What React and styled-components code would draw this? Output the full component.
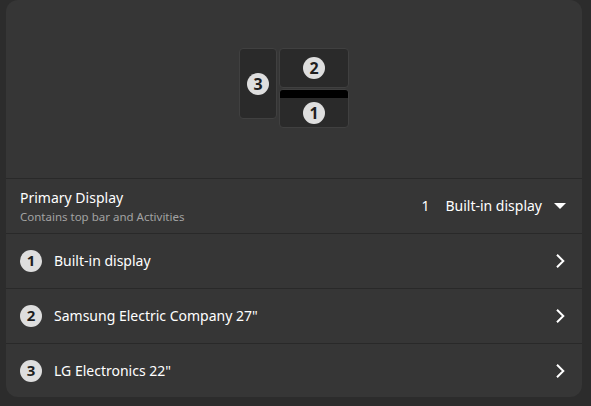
import React from "react";
import styled, { createGlobalStyle } from "styled-components";

const Global = createGlobalStyle`
  html, body { margin: 0; padding: 0; background: #2c2c2c; }
  body { font-family: "Noto Sans", "Open Sans", sans-serif; color: #ffffff; }
`;

const Page = styled.div`
  width: 591px;
  height: 406px;
  padding: 0 9px 0 6px;
  box-sizing: border-box;
`;

const Card = styled.div`
  background: #363636;
  border-radius: 12px;
  height: 397px;
  display: flex;
  flex-direction: column;
  overflow: hidden;
`;

const Arrangement = styled.div`
  height: 179px;
  flex-shrink: 0;
  display: flex;
  align-items: center;
  justify-content: center;
  border-bottom: 1px solid #292929;
  padding-bottom: 2px;
  box-sizing: border-box;
`;

const Canvas = styled.div`
  position: relative;
  width: 110px;
  height: 80px;
`;

const Monitor = styled.div`
  position: absolute;
  box-sizing: border-box;
  background: #2a2a2a;
  border: 1px solid #404040;
  border-radius: 4px;
  display: flex;
  flex-direction: column;
  align-items: center;
  justify-content: center;
  overflow: hidden;
`;

const TopBar = styled.div`
  position: absolute;
  left: 0;
  right: 0;
  top: 0;
  height: 8px;
  background: #000;
`;

const Badge = styled.div`
  width: ${(p) => p.size}px;
  height: ${(p) => p.size}px;
  border-radius: 50%;
  background: #dedede;
  color: #1e1e1e;
  font-weight: 700;
  font-size: ${(p) => p.fs}px;
  display: flex;
  align-items: center;
  justify-content: center;
  flex-shrink: 0;
  line-height: 1;
  position: relative;
`;

const Row = styled.div`
  height: 54px;
  flex-shrink: 0;
  display: flex;
  align-items: center;
  padding: 0 14px 1px 14px;
  box-sizing: border-box;
  border-bottom: ${(p) => (p.last ? "none" : "1px solid #292929")};
  height: ${(p) => (p.last ? "54px" : "55px")};
  gap: 12px;
`;

const TitleBlock = styled.div`
  display: flex;
  flex-direction: column;
  flex: 1;
  gap: 2px;
`;

const Title = styled.div`
  font-size: 14px;
  color: #ffffff;
`;

const Subtitle = styled.div`
  font-size: 11.5px;
  color: #a3a3a3;
`;

const Label = styled.div`
  flex: 1;
  font-size: 14px;
  color: #ffffff;
`;

const Dropdown = styled.div`
  display: flex;
  align-items: center;
  font-size: 14px;
  color: #ffffff;
`;

const DropNum = styled.span`
  margin-right: 16px;
`;

const PrimaryRow = styled(Row)`
  padding-left: 14px;
  padding-right: 14px;
`;

const Chevron = () => (
  <svg width="16" height="16" viewBox="0 0 16 16" fill="none">
    <path d="M5 1.8 L11.3 8 L5 14.2" stroke="#ffffff" strokeWidth="2" />
  </svg>
);

const Caret = () => (
  <svg width="16" height="16" viewBox="0 0 16 16" style={{ marginLeft: 10 }}>
    <path d="M2 5 L14 5 L8 11 Z" fill="#ffffff" />
  </svg>
);

const displays = [
  { n: 1, name: "Built-in display" },
  { n: 2, name: "Samsung Electric Company 27\"" },
  { n: 3, name: "LG Electronics 22\"" },
];

export default function App() {
  return (
    <>
      <Global />
      <Page>
        <Card>
          <Arrangement>
            <Canvas>
              <Monitor style={{ left: 0, top: 0, width: 38, height: 71 }}>
                <Badge size={22} fs={16}>3</Badge>
              </Monitor>
              <Monitor style={{ left: 40, top: 0, width: 70, height: 40 }}>
                <Badge size={22} fs={16}>2</Badge>
              </Monitor>
              <Monitor style={{ left: 40, top: 41, width: 70, height: 39, paddingTop: 8 }}>
                <TopBar />
                <Badge size={22} fs={16}>1</Badge>
              </Monitor>
            </Canvas>
          </Arrangement>
          <PrimaryRow>
            <TitleBlock>
              <Title>Primary Display</Title>
              <Subtitle>Contains top bar and Activities</Subtitle>
            </TitleBlock>
            <Dropdown>
              <DropNum>1</DropNum>
              Built-in display
              <Caret />
            </Dropdown>
          </PrimaryRow>
          {displays.map((d, i) => (
            <Row key={d.n} last={i === displays.length - 1}>
              <Badge size={22} fs={15}>{d.n}</Badge>
              <Label>{d.name}</Label>
              <Chevron />
            </Row>
          ))}
        </Card>
      </Page>
    </>
  );
}
